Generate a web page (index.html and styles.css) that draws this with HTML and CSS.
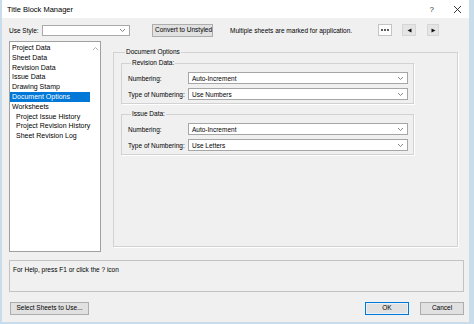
FILE: index.html
```html
<!DOCTYPE html>
<html lang="en">
<head>
<meta charset="UTF-8">
<meta name="viewport" content="width=device-width, initial-scale=1.0">
<title>Title Block Manager</title>
<link rel="stylesheet" href="styles.css">
</head>
<body>

<div class="window">

  <!-- TITLE BAR -->
  <div class="titlebar">
    <span class="title">Title Block Manager</span>
    <span class="help-q">?</span>
    <svg class="close-x" width="9" height="9" viewBox="0 0 9 9"><path d="M1 1L8 8M8 1L1 8" stroke="#222" stroke-width="0.9" fill="none"/></svg>
  </div>

  <!-- TOOLBAR -->
  <div class="toolbar">
    <span class="style-label">Use Style:</span>
    <div class="combo style-combo">
      <span class="combo-text"></span>
      <svg class="chev" width="7" height="5" viewBox="0 0 7 5"><path d="M1 1L3.5 3.5L6 1" stroke="#777" stroke-width="0.9" fill="none"/></svg>
    </div>
    <button class="btn convert">Convert to Unstyled</button>
    <span class="status">Multiple sheets are marked for application.</span>
    <div class="nav">
      <button class="navbtn dots"><svg width="8" height="2" viewBox="0 0 8 2"><circle cx="1" cy="1" r="0.9" fill="#111"/><circle cx="4" cy="1" r="0.9" fill="#111"/><circle cx="7" cy="1" r="0.9" fill="#111"/></svg></button>
      <button class="navbtn arrow"><svg width="5" height="5" viewBox="0 0 5 5"><path d="M4.5 0.5V4.5L0.5 2.5Z" fill="#111"/></svg></button>
      <button class="navbtn arrow"><svg width="5" height="5" viewBox="0 0 5 5"><path d="M0.5 0.5V4.5L4.5 2.5Z" fill="#111"/></svg></button>
    </div>
  </div>

  <!-- MAIN -->
  <div class="main">
    <div class="tree">
      <ul class="tree-items">
        <li>Project Data</li>
        <li>Sheet Data</li>
        <li>Revision Data</li>
        <li>Issue Data</li>
        <li>Drawing Stamp</li>
        <li class="selected">Document Options</li>
        <li>Worksheets</li>
        <li class="sub">Project Issue History</li>
        <li class="sub">Project Revision History</li>
        <li class="sub">Sheet Revision Log</li>
      </ul>
      <div class="tree-scroll">
        <svg width="7" height="5" viewBox="0 0 7 5"><path d="M1 4L3.5 1.5L6 4" stroke="#aaa" stroke-width="0.9" fill="none"/></svg>
      </div>
    </div>

    <fieldset class="group outer">
      <legend>Document Options</legend>

      <fieldset class="group inner">
        <legend>Revision Data:</legend>
        <div class="field">
          <span class="field-label">Numbering:</span>
          <div class="combo field-combo">
            <span class="combo-text">Auto-Increment</span>
            <svg class="chev" width="7" height="5" viewBox="0 0 7 5"><path d="M1 1L3.5 3.5L6 1" stroke="#777" stroke-width="0.9" fill="none"/></svg>
          </div>
        </div>
        <div class="field">
          <span class="field-label">Type of Numbering:</span>
          <div class="combo field-combo">
            <span class="combo-text">Use Numbers</span>
            <svg class="chev" width="7" height="5" viewBox="0 0 7 5"><path d="M1 1L3.5 3.5L6 1" stroke="#777" stroke-width="0.9" fill="none"/></svg>
          </div>
        </div>
      </fieldset>

      <fieldset class="group inner">
        <legend>Issue Data:</legend>
        <div class="field">
          <span class="field-label">Numbering:</span>
          <div class="combo field-combo">
            <span class="combo-text">Auto-Increment</span>
            <svg class="chev" width="7" height="5" viewBox="0 0 7 5"><path d="M1 1L3.5 3.5L6 1" stroke="#777" stroke-width="0.9" fill="none"/></svg>
          </div>
        </div>
        <div class="field">
          <span class="field-label">Type of Numbering:</span>
          <div class="combo field-combo">
            <span class="combo-text">Use Letters</span>
            <svg class="chev" width="7" height="5" viewBox="0 0 7 5"><path d="M1 1L3.5 3.5L6 1" stroke="#777" stroke-width="0.9" fill="none"/></svg>
          </div>
        </div>
      </fieldset>
    </fieldset>
  </div>

  <!-- HELP -->
  <div class="helpbox">For Help, press F1 or click the ? icon</div>

  <!-- FOOTER -->
  <div class="footer">
    <button class="btn select-sheets">Select Sheets to Use...</button>
    <button class="btn ok">OK</button>
    <button class="btn cancel">Cancel</button>
  </div>

</div>

</body>
</html>
```

FILE: styles.css
```css
body {
  margin: 0;
  width: 474px;
  height: 324px;
  background: #c9dcec;
  font-family: "Liberation Sans", Arial, sans-serif;
  font-size: 6.5px;
  color: #000;
  overflow: hidden;
}

.window {
  margin-left: 2px;
  width: 467px;
  height: 322px;
  background: #f0f0f0;
  box-sizing: border-box;
  padding: 0 5px 0 7px;
}

/* title bar */
.titlebar {
  display: flex;
  align-items: center;
  height: 18px;
  margin: 0 -5px 0 -7px;
  padding: 0 7px 0 5px;
  background: #fff;
}
.title { font-size: 7.5px; flex: 1; }
.help-q { font-size: 8px; color: #333; margin-right: 19px; }

/* toolbar */
.toolbar {
  display: flex;
  align-items: center;
  height: 14px;
  margin-top: 5px;
  padding-right: 25px;
  white-space: nowrap;
}
.style-label { width: 33px; }
.combo {
  display: flex;
  align-items: center;
  background: #fff;
  border: 1px solid #a9a9a9;
  box-sizing: border-box;
  height: 11px;
}
.combo-text { flex: 1; padding-left: 3px; white-space: nowrap; }
.chev { margin-right: 3px; }
.style-combo { width: 88px; }

.btn {
  font-family: inherit;
  font-size: 6.5px;
  color: #000;
  background: #e1e1e1;
  border: 1px solid #adadad;
  box-sizing: border-box;
  height: 13px;
  padding: 0 2px;
  line-height: 1;
  white-space: nowrap;
}
.convert { margin-left: 22px; width: 61px; }
.status { margin-left: 17px; }

.nav { display: flex; align-items: center; margin-left: auto; }
.navbtn {
  display: flex;
  align-items: center;
  justify-content: center;
  box-sizing: border-box;
  width: 14px;
  height: 12px;
  padding: 0;
  background: #e5e5e5;
  border: 1px solid #d6d6d6;
}
.navbtn svg { display: block; }
.dots { background: #fdfdfd; border-color: #c4c4c4; }
.navbtn + .navbtn { margin-left: 10px; }
.navbtn.arrow:last-child { width: 12px; margin-left: 11px; }

/* main area */
.main {
  display: flex;
  margin-top: 4px;
  height: 211px;
}

.tree {
  display: flex;
  width: 92px;
  box-sizing: border-box;
  background: #fff;
  border: 1px solid #a0a0a0;
}
.tree-items {
  flex: 1;
  list-style: none;
  margin: 0;
  padding: 1px 0 0 0;
  font-size: 7px;
}
.tree-items li {
  height: 9.8px;
  line-height: 9.8px;
  padding-left: 2px;
  white-space: nowrap;
}
.tree-items li.sub { padding-left: 6px; }
.tree-items li.selected { background: #0078d7; color: #fff; }
.tree-scroll {
  width: 11px;
  display: flex;
  justify-content: center;
  padding-top: 4px;
}
.tree-scroll svg { display: block; }

/* group boxes */
.group {
  margin: 0;
  border: 1px solid #d2d2d2;
  box-shadow: 1px 1px 0 #fff;
  box-sizing: border-box;
  min-width: 0;
}
.group legend {
  padding: 0 1px;
  line-height: 8px;
}
.outer {
  margin: 7px 0 0 12px;
  width: 345px;
  height: 199px;
  padding: 3px 0 0 7px;
}
.outer legend { margin-left: 4px; }

.inner {
  width: 293px;
  padding: 5px 5px 3px 6px;
}
.inner legend { margin-left: 3px; }
.inner + .inner { margin-top: 6px; }

.field {
  display: flex;
  align-items: center;
  height: 12px;
}
.field + .field { margin-top: 4px; }
.field-label { width: 60px; flex-shrink: 0; white-space: nowrap; }
.field-combo { flex: 1; height: 12px; border-color: #a6a6a6; }

/* help */
.helpbox {
  margin-top: 8px;
  height: 32px;
  box-sizing: border-box;
  border: 1px solid #c3c3c3;
  padding: 5px 3px;
}

/* footer */
.footer {
  display: flex;
  margin-top: 10px;
}
.select-sheets { width: 79px; margin-left: 1px; }
.ok {
  width: 44px;
  margin-left: auto;
  border: 1px solid #0078d7;
  box-shadow: inset 0 0 0 1px #e9f1f8;
}
.cancel { width: 44px; margin-left: 11px; }
```
